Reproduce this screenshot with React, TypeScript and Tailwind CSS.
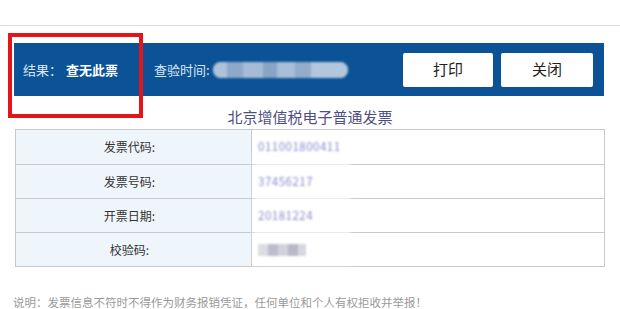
import React from 'react';

const rows = [
  { label: '发票代码:', value: '011001800411' },
  { label: '发票号码:', value: '37456217' },
  { label: '开票日期:', value: '20181224' },
  { label: '校验码:', value: '' },
];

const App: React.FC = () => {
  return (
    <div className="relative w-[620px] h-[309px] overflow-hidden bg-white font-['Noto_Sans_CJK_SC','Noto_Sans',sans-serif]">
      <div className="h-[25px]" />
      <div className="border-t border-[#dedede]" />

      <div className="mt-[17px] ml-[14px] mr-[16px] h-[53px] bg-[#0b5396] flex items-center pl-[9px] pr-[11px]">
        <span className="text-[13px] text-[#dce6f2]">结果：</span>
        <span className="ml-[4px] text-[13px] font-bold text-white">查无此票</span>
        <span className="ml-[36px] text-[13px] text-[#dce6f2]">查验时间:</span>
        <div className="ml-[3px] mt-[1px] w-[135px] h-[16px] rounded-full bg-[#9fb6d0] blur-[1px] flex items-center overflow-hidden">
          <div className="w-[14px] h-full bg-[#aec2da]" />
          <div className="w-[16px] h-full bg-[#8ea8c8]" />
          <div className="w-[20px] h-full bg-[#a6bbd5]" />
          <div className="w-[14px] h-full bg-[#8aa4c4]" />
          <div className="w-[18px] h-full bg-[#a9bed7]" />
          <div className="w-[16px] h-full bg-[#93acca]" />
          <div className="flex-1 h-full bg-[#b3c6dc]" />
        </div>
        <div className="ml-auto flex gap-[8px]">
          <button className="w-[90px] h-[34px] rounded-[2px] bg-white text-[15px] text-[#222]">打印</button>
          <button className="w-[92px] h-[34px] rounded-[2px] bg-white text-[15px] text-[#222]">关闭</button>
        </div>
      </div>

      <div className="mt-[11px] h-[20px] leading-[20px] text-center text-[15px] text-[#4e4e86]">北京增值税电子普通发票</div>

      <div className="relative mt-[2px] ml-[15px] w-[590px] border border-[#c6c9cd]">
        {rows.map((r, i) => (
          <div key={r.label} className={`flex h-[34px] ${i > 0 ? 'border-t border-[#c6c9cd]' : ''}`}>
            <div className="w-[236px] bg-[#eef5fb] border-r border-[#c6c9cd] flex items-center justify-center pr-[8px] text-[12px] text-[#333]">
              {r.label}
            </div>
            <div className="flex-1 flex items-center pl-[6px]">
              {r.value ? (
                <span className="relative z-10 text-[11.5px] text-[#8a8acc] blur-[1.3px] tracking-[0.5px]">{r.value}</span>
              ) : (
                <div className="relative z-10 flex h-[12px] blur-[1px]">
                  <div className="w-[10px] bg-[#dcdce4]" />
                  <div className="w-[10px] bg-[#bcbccc]" />
                  <div className="w-[10px] bg-[#d2d2dc]" />
                  <div className="w-[10px] bg-[#b8b8ca]" />
                  <div className="w-[8px] bg-[#d6d6e0]" />
                </div>
              )}
            </div>
          </div>
        ))}
        <div className="absolute left-[237px] top-[20px] w-[98px] h-[116px] bg-white/60 blur-[2px]" />
      </div>

      <div className="mt-[27px] ml-[13px] h-[16px] leading-[16px] text-[11.5px] text-[#9a9a9a]">
        说明：发票信息不符时不得作为财务报销凭证，任何单位和个人有权拒收并举报！
      </div>

      <div className="absolute left-[8px] top-[33px] w-[135px] h-[85px] border-[4px] border-[#e3151b]" />
    </div>
  );
};

export default App;
